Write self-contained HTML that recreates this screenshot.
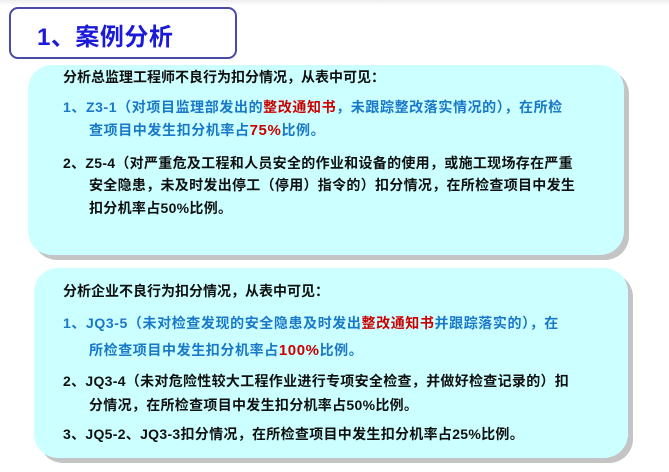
<!DOCTYPE html><html><head><meta charset="utf-8"><style>
body{margin:0;width:669px;height:472px;background:#fff;position:relative;overflow:hidden;font-family:"Liberation Sans","Noto Sans CJK SC",sans-serif;font-weight:bold;font-size:14px;color:#111}
.top{position:absolute;left:0;top:0;width:669px;height:6px;background:linear-gradient(#eee,#fff)}
.title{position:absolute;left:9px;top:7px;width:224px;height:48px;border:2px solid #4a4aa8;border-radius:9px;background:#fff}
.title span{position:absolute;left:26px;top:8px;font-size:24px;color:#1a1ad8;letter-spacing:0.5px}
.box{position:absolute;background:#ccffff;border-radius:24px;box-shadow:5px 5px 0 #c4c4c4}
.l{position:absolute;white-space:nowrap;letter-spacing:0.3px}
.w{letter-spacing:0.6px}
.b{color:#1a78c8}.r{color:#cc0000}
</style></head><body>
<div class="top"></div>
<div class="title"><span>1、案例分析</span></div>
<div class="box" style="left:28px;top:65px;width:596px;height:190px"></div>
<div class="box" style="left:34px;top:268px;width:594px;height:190px"></div>
<div class="l" style="left:63px;top:67px;letter-spacing:0">分析总监理工程师不良行为扣分情况，从表中可见：</div>
<div class="l b w" style="left:63px;top:97px">1、Z3-1（对项目监理部发出的<span class="r">整改通知书</span>，未跟踪整改落实情况的），在所检</div>
<div class="l b w" style="left:89px;top:120px">查项目中发生扣分机率占<span class="r" style="font-size:15px">75%</span>比例。</div>
<div class="l" style="left:63px;top:153px">2、Z5-4（对严重危及工程和人员安全的作业和设备的使用，或施工现场存在严重</div>
<div class="l" style="left:89px;top:175px">安全隐患，未及时发出停工（停用）指令的）扣分情况，在所检查项目中发生</div>
<div class="l" style="left:89px;top:198px">扣分机率占50%比例。</div>
<div class="l" style="left:63px;top:281px;letter-spacing:0">分析企业不良行为扣分情况，从表中可见：</div>
<div class="l b w" style="left:63px;top:313px">1、JQ3-5（未对检查发现的安全隐患及时发出<span class="r">整改通知书</span>并跟踪落实的），在</div>
<div class="l b w" style="left:89px;top:340px">所检查项目中发生扣分机率占<span class="r" style="font-size:15px">100%</span>比例。</div>
<div class="l" style="left:63px;top:371px">2、JQ3-4（未对危险性较大工程作业进行专项安全检查，并做好检查记录的）扣</div>
<div class="l" style="left:89px;top:395px">分情况，在所检查项目中发生扣分机率占50%比例。</div>
<div class="l" style="left:63px;top:424px">3、JQ5-2、JQ3-3扣分情况，在所检查项目中发生扣分机率占25%比例。</div>
</body></html>
